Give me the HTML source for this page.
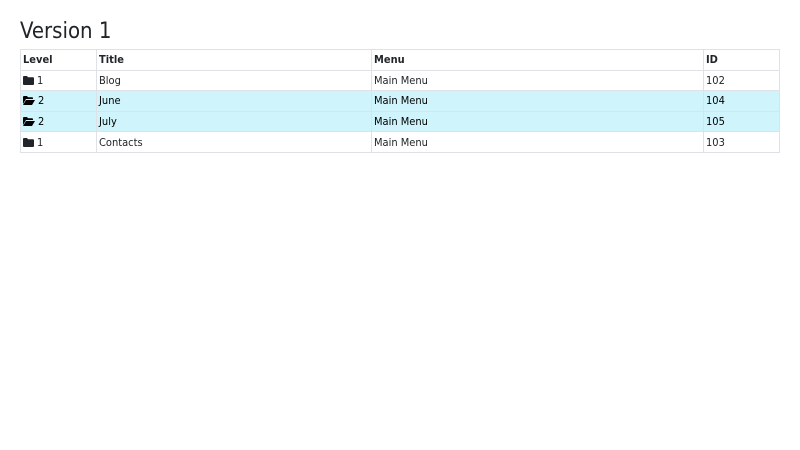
<!DOCTYPE html>
<html><head><style>
body{margin:0;background:#fff;font-family:"DejaVu Sans Condensed","DejaVu Sans","Liberation Sans",sans-serif;font-stretch:condensed;color:#212529}
h1{position:absolute;left:20px;top:19px;margin:0;font-size:22px;font-weight:400;line-height:26px}
table{position:absolute;left:20px;top:49px;width:760px;border-collapse:collapse;font-size:11px}
td,th{border:1px solid #dee2e6;padding:0 2px;height:19.6px;text-align:left;vertical-align:middle;white-space:nowrap}
th{font-weight:bold}
tr.a td{background:#cff4fc;color:#000}
svg{vertical-align:-1px;margin-right:3px}
</style></head><body>
<h1>Version 1</h1>
<table>
<colgroup><col style="width:76px"><col style="width:275px"><col style="width:332px"><col></colgroup>
<tr><th>Level</th><th>Title</th><th>Menu</th><th>ID</th></tr>
<tr><td><svg width="11" height="9" viewBox="0 0 11 9"><path d="M0 1Q0 0 1 0H4L5 1.3H10Q11 1.3 11 2.3V8Q11 9 10 9H1Q0 9 0 8Z" fill="#212529"/></svg>1</td><td>Blog</td><td>Main Menu</td><td>102</td></tr>
<tr class="a"><td><svg width="12" height="9" viewBox="0 0 12 9"><path d="M0 1Q0 0 1 0H4L5 1.3H9Q10 1.3 10 2.3V3H3L0 8Z" fill="#000"/><path d="M3 4H12L9 9H0Z" fill="#000"/></svg>2</td><td>June</td><td>Main Menu</td><td>104</td></tr>
<tr class="a"><td><svg width="12" height="9" viewBox="0 0 12 9"><path d="M0 1Q0 0 1 0H4L5 1.3H9Q10 1.3 10 2.3V3H3L0 8Z" fill="#000"/><path d="M3 4H12L9 9H0Z" fill="#000"/></svg>2</td><td>July</td><td>Main Menu</td><td>105</td></tr>
<tr><td><svg width="11" height="9" viewBox="0 0 11 9"><path d="M0 1Q0 0 1 0H4L5 1.3H10Q11 1.3 11 2.3V8Q11 9 10 9H1Q0 9 0 8Z" fill="#212529"/></svg>1</td><td>Contacts</td><td>Main Menu</td><td>103</td></tr>
</table>
</body></html>
